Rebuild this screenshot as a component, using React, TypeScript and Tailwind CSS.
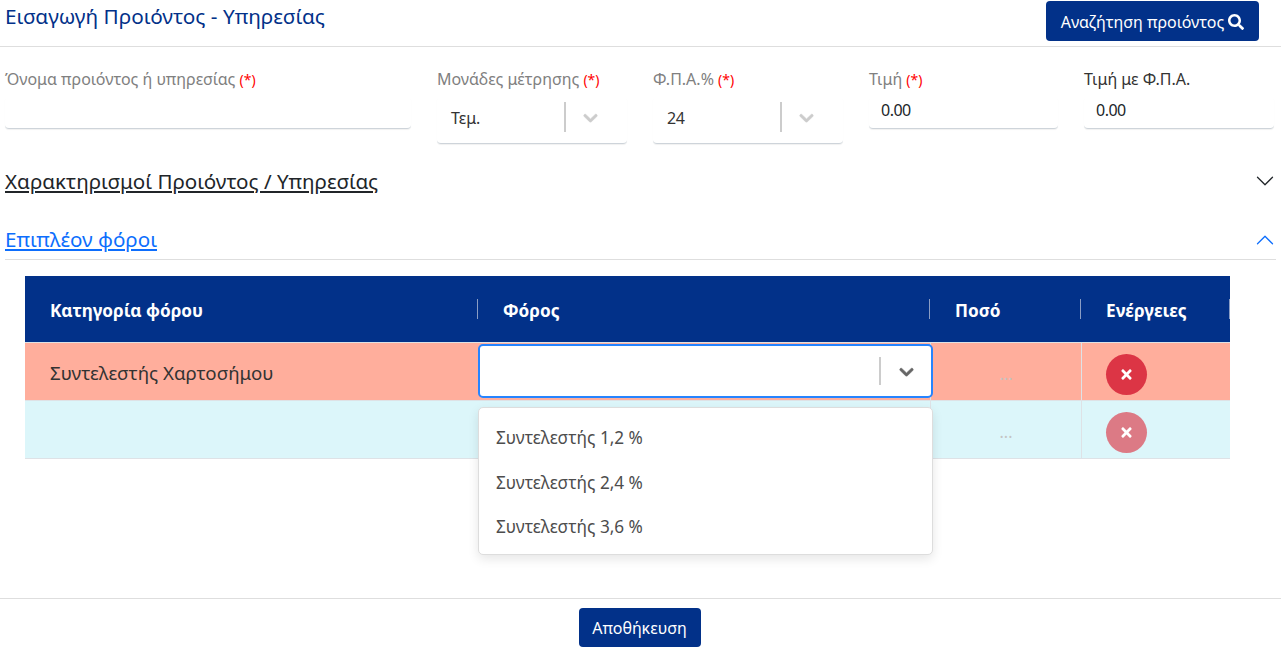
import { FaSearch, FaTimes } from "react-icons/fa";

const NAVY = "bg-[#023189]";

// react-select's own indicator
function SelectChevron({ className }: { className: string }) {
  return (
    <svg viewBox="0 0 20 20" className={className} fill="currentColor" stroke="currentColor" strokeWidth="0.6">
      <path d="M4.516 7.548c0.436-0.446 1.043-0.481 1.576 0l3.908 3.747 3.908-3.747c0.533-0.481 1.141-0.446 1.576 0 0.436 0.445 0.408 1.197 0 1.615-0.406 0.418-4.695 4.502-4.695 4.502-0.217 0.223-0.502 0.335-0.789 0.335s-0.572-0.112-0.791-0.335c0 0-4.287-4.084-4.695-4.502s-0.436-1.17 0-1.615z" />
    </svg>
  );
}

function AccordionChevron({ up, className }: { up?: boolean; className: string }) {
  return (
    <svg viewBox="0 0 16 16" className={`${className} ${up ? "rotate-180" : ""}`} fill="currentColor">
      <path
        fillRule="evenodd"
        d="M1.646 4.646a.5.5 0 0 1 .708 0L8 10.293l5.646-5.647a.5.5 0 0 1 .708.708l-6 6a.5.5 0 0 1-.708 0l-6-6a.5.5 0 0 1 0-.708z"
      />
    </svg>
  );
}

function Label({ text, required, dark }: { text: string; required?: boolean; dark?: boolean }) {
  return (
    <div className={`h-[21px] text-[16px] leading-[21px] ${dark ? "text-[#333333]" : "text-[#808080]"}`}>
      {text} {required && <span className="text-[14px] text-[#ff0000]">(*)</span>}
    </div>
  );
}

function TextField({ label, value, required, dark, width }: { label: string; value?: string; required?: boolean; dark?: boolean; width: string }) {
  return (
    <div className={width}>
      <Label text={label} required={required} dark={dark} />
      <div className="mt-[7px] h-[32px] rounded-[4px] border-b border-[#ced4da] px-3 pt-px text-[16px] leading-[24px] tracking-[-0.5px] text-[#212529] shadow-[0_1px_1px_rgba(0,0,0,0.06)]">
        {value}
      </div>
    </div>
  );
}

function SelectField({ label, value, tight }: { label: string; value: string; tight?: boolean }) {
  return (
    <div className="w-[190px]">
      <Label text={label} required />
      <div className="mt-[7px] flex h-[47px] items-start rounded-[4px] border-b border-[#ced4da] pr-[12px] pt-[5px] shadow-[0_1px_1px_rgba(0,0,0,0.06)]">
        <div className={`h-[30px] flex-1 pl-[14px] pt-[4px] text-[16px] leading-[24px] text-[#333333] ${tight ? "tracking-[-0.5px]" : ""}`}>{value}</div>
        <div className="h-[30px] w-[2px] bg-[#cccccc]" />
        <div className="flex h-[30px] w-[49px] items-center justify-center text-[#cccccc]">
          <SelectChevron className="h-[23px] w-[23px]" />
        </div>
      </div>
    </div>
  );
}

function HeaderCell({ label, width, divider }: { label: string; width: string; divider?: boolean }) {
  return (
    <div className={`flex h-full items-center ${width}`}>
      {divider && <div className="h-[20px] w-px bg-[#8a9dc4]" />}
      <div className="pl-[25px] pt-[3px] text-[17.2px] font-bold text-white">{label}</div>
    </div>
  );
}

function RemoveButton({ faded }: { faded?: boolean }) {
  return (
    <div className={`flex h-[41px] w-[41px] items-center justify-center rounded-full text-white ${faded ? "bg-[#dc7a85]" : "bg-[#dc3545]"}`}>
      <FaTimes className="h-[15px] w-[15px]" />
    </div>
  );
}

function TaxRow({ name, bg, faded }: { name?: string; bg: string; faded?: boolean }) {
  return (
    <div className={`flex h-[58px] border-b border-[#dee2e6] ${bg}`}>
      <div className="flex w-[453px] items-center pl-[25px] pt-[3px] text-[18.7px] text-[#333333]">{name}</div>
      <div className="w-[452px]" />
      <div className="flex w-[151px] items-end justify-center border-l border-[#dee2e6] pb-[19px] text-[16px] leading-[14px] text-[#c4c4c4]">
        ...
      </div>
      <div className="flex flex-1 items-center border-l border-[#dee2e6] pl-[24px] pt-[5px]">
        <RemoveButton faded={faded} />
      </div>
    </div>
  );
}

export default function App() {
  return (
    <div className="flex h-[661px] w-[1281px] flex-col bg-white font-['Noto_Sans',sans-serif]">
      <header className="flex h-[47px] items-start justify-between border-b border-[#dedede] pl-[5px] pr-[22px] pt-px">
        <h1 className="pt-px text-[20.75px] leading-[28px] text-[#023189]">Εισαγωγή Προιόντος - Υπηρεσίας</h1>
        <button className={`flex h-[40px] w-[213px] items-center justify-center gap-[4px] rounded-[4px] ${NAVY} pt-px text-[16px] text-white`}>
          Αναζήτηση προιόντος
          <FaSearch className="h-[16px] w-[16px]" />
        </button>
      </header>

      <main className="flex-1 px-[5px]">
        <div className="flex gap-[26px] pt-[22px]">
          <TextField label="Όνομα προιόντος ή υπηρεσίας" required width="w-[406px]" />
          <SelectField label="Μονάδες μέτρησης" value="Τεμ." />
          <SelectField label="Φ.Π.Α.%" value="24" tight />
          <TextField label="Τιμή" value="0.00" required width="w-[189px]" />
          <TextField label="Τιμή με Φ.Π.Α." value="0.00" dark width="w-[190px]" />
        </div>

        <div className="mt-[22px] flex h-[30px] items-center justify-between text-[#212529]">
          <span className="text-[20.6px] underline">Χαρακτηρισμοί Προιόντος / Υπηρεσίας</span>
          <AccordionChevron className="mr-px h-[20px] w-[20px]" />
        </div>

        <div className="mt-[28px] flex h-[36px] items-center justify-between border-b border-[#dedede] pb-[4px] text-[#0d6efd]">
          <span className="text-[20.6px] underline">Επιπλέον φόροι</span>
          <AccordionChevron up className="mr-px h-[20px] w-[20px]" />
        </div>

        <div className="relative ml-[20px] mt-[16px] w-[1205px]">
          <div className={`flex h-[67px] items-center border-b border-[#dee2e6] ${NAVY}`}>
            <HeaderCell label="Κατηγορία φόρου" width="w-[452px]" />
            <HeaderCell label="Φόρος" width="w-[452px]" divider />
            <HeaderCell label="Ποσό" width="w-[151px]" divider />
            <HeaderCell label="Ενέργειες" width="w-[149px]" divider />
            <div className="h-[20px] w-px bg-[#8a9dc4]" />
          </div>
          <TaxRow name="Συντελεστής Χαρτοσήμου" bg="bg-[#ffae9c]" />
          <TaxRow bg="bg-[#dcf6fa]" faded />

          <div className="absolute left-[453px] top-[68px] flex h-[54px] w-[455px] items-center justify-end rounded-[5px] border-2 border-[#2684ff] bg-white">
            <div className="h-[28px] w-[2px] bg-[#cccccc]" />
            <div className="flex w-[50px] items-center justify-center text-[#666666]">
              <SelectChevron className="h-[23px] w-[23px]" />
            </div>
          </div>

          <ul className="absolute left-[453px] top-[131px] w-[455px] rounded-[5px] border border-[#dddddd] bg-white pb-[4px] pt-[8px] text-[17.2px] text-[#4d4d4d] shadow-[0_4px_11px_rgba(0,0,0,0.1)]">
            <li className="flex h-[44.5px] items-center pl-[17px]">Συντελεστής 1,2 %</li>
            <li className="flex h-[44.5px] items-center pl-[17px]">Συντελεστής 2,4 %</li>
            <li className="flex h-[44.5px] items-center pl-[17px]">Συντελεστής 3,6 %</li>
          </ul>
        </div>
      </main>

      <footer className="flex h-[63px] justify-center border-t border-[#dedede] pr-[2px] pt-[9px]">
        <button className={`h-[39px] w-[122px] rounded-[4px] ${NAVY} text-[16px] text-white`}>Αποθήκευση</button>
      </footer>
    </div>
  );
}
